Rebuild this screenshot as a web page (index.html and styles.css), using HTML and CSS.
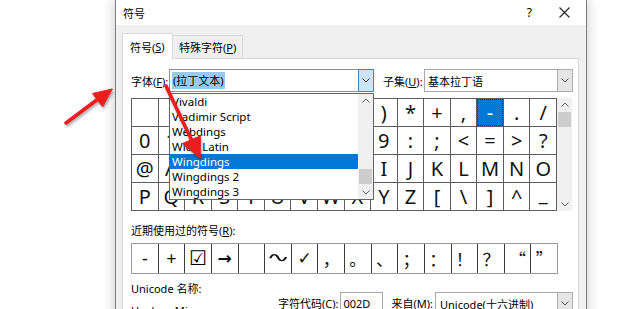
FILE: index.html
```html
<!DOCTYPE html>
<html>
<head>
<meta charset="utf-8">
<link rel="stylesheet" href="styles.css">
</head>
<body>
<div class="dialog">
  <div class="titlebar">
    <span class="title">符号</span>
    <span class="help">?</span>
    <svg class="close" width="11" height="11" viewBox="0 0 11 11"><path d="M0.5 0.5 L10.5 10.5 M10.5 0.5 L0.5 10.5" stroke="#222" stroke-width="1.1" fill="none"/></svg>
  </div>
  <div class="body">
    <div class="tabs">
      <div class="tab active">符号(<u>S</u>)</div>
      <div class="tab">特殊字符(<u>P</u>)</div>
    </div>
    <div class="panel">
      <div class="fontrow">
        <span class="lbl lbl-font">字体(<u>F</u>):</span>
        <div class="combo combo-font">
          <span class="value"><span class="sel">(拉丁文本)</span></span>
          <span class="btn btn-hot"><svg width="8" height="5" viewBox="0 0 8 5"><path d="M0.5 0.5 L4 4 L7.5 0.5" stroke="#333" fill="none"/></svg></span>
        </div>
        <span class="lbl lbl-subset">子集(<u>U</u>):</span>
        <div class="combo combo-subset">
          <span class="value">基本拉丁语</span>
          <span class="btn"><svg width="8" height="5" viewBox="0 0 8 5"><path d="M0.5 0.5 L4 4 L7.5 0.5" stroke="#555" fill="none"/></svg></span>
        </div>
      </div>
      <div class="gridwrap">
        <div class="grid">
          <span></span><span>!</span><span>"</span><span>#</span><span>$</span><span>%</span><span>&amp;</span><span>'</span><span>(</span><span>)</span><span>*</span><span>+</span><span>,</span><span class="cur">-</span><span>.</span><span>/</span>
          <span>0</span><span>1</span><span>2</span><span>3</span><span>4</span><span>5</span><span>6</span><span>7</span><span>8</span><span>9</span><span>:</span><span>;</span><span>&lt;</span><span>=</span><span>&gt;</span><span>?</span>
          <span>@</span><span>A</span><span>B</span><span>C</span><span>D</span><span>E</span><span>F</span><span>G</span><span>H</span><span>I</span><span>J</span><span>K</span><span>L</span><span>M</span><span>N</span><span>O</span>
          <span>P</span><span>Q</span><span>R</span><span>S</span><span>T</span><span>U</span><span>V</span><span>W</span><span>X</span><span>Y</span><span>Z</span><span>[</span><span>\</span><span>]</span><span>^</span><span class="us">_</span>
        </div>
        <div class="vscroll">
          <svg class="arr" width="8" height="5" viewBox="0 0 8 5"><path d="M0.5 4.5 L4 1 L7.5 4.5" stroke="#606060" fill="none"/></svg>
          <div class="thumb"></div>
          <div class="track"></div>
          <svg class="arr" width="8" height="5" viewBox="0 0 8 5"><path d="M0.5 0.5 L4 4 L7.5 0.5" stroke="#606060" fill="none"/></svg>
        </div>
      </div>
      <div class="recent-label">近期使用过的符号(<u>R</u>):</div>
      <div class="recent">
        <span>-</span><span>+</span><span class="sym box">&#x2611;&#xFE0E;</span><span class="sym arrow">→</span><span></span><span class="sym wave"><b class="wv">&#x223F;</b></span><span class="sym">&#x2713;&#xFE0E;</span><span class="cjk">，</span><span class="cjk">。</span><span class="cjk">、</span><span class="cjk">；</span><span class="cjk">：</span><span class="cjk">！</span><span class="cjk">？</span><span class="cjk">“</span><span class="cjk">”</span>
      </div>
      <div class="uname">Unicode 名称:</div>
      <div class="coderow">
        <span class="hname">Hyphen-Minus</span>
        <span class="lbl">字符代码(<u>C</u>):</span>
        <span class="input">002D</span>
        <span class="lbl lbl-from">来自(<u>M</u>):</span>
        <div class="combo combo-from">
          <span class="value">Unicode(十六进制)</span>
          <span class="btn"><svg width="8" height="5" viewBox="0 0 8 5"><path d="M0.5 0.5 L4 4 L7.5 0.5" stroke="#555" fill="none"/></svg></span>
        </div>
      </div>
    </div>
  </div>
  <div class="dropdown">
    <ul class="items">
      <li>Vivaldi</li>
      <li>Vladimir Script</li>
      <li>Webdings</li>
      <li>Wide Latin</li>
      <li class="on">Wingdings</li>
      <li>Wingdings 2</li>
      <li>Wingdings 3</li>
    </ul>
    <div class="lscroll">
      <svg class="arr" width="8" height="5" viewBox="0 0 8 5"><path d="M0.5 4.5 L4 1 L7.5 4.5" stroke="#606060" fill="none"/></svg>
      <div class="ltrack"></div>
      <div class="lthumb"></div>
      <svg class="arr" width="8" height="5" viewBox="0 0 8 5"><path d="M0.5 0.5 L4 4 L7.5 0.5" stroke="#606060" fill="none"/></svg>
    </div>
  </div>
</div>
<svg class="arrows" width="620" height="309" viewBox="0 0 620 309">
  <g fill="#ee1c1c" stroke="#ee1c1c" stroke-linecap="round">
    <line x1="66" y1="123" x2="98" y2="99" stroke-width="3.5"/>
    <polygon points="112,89 92.5,93.5 102.5,106.5" stroke-width="1" stroke-linejoin="round"/>
    <line x1="166" y1="86" x2="192" y2="141" stroke-width="3.5"/>
    <polygon points="200,158 182.5,143.5 200,136" stroke-width="1" stroke-linejoin="round"/>
  </g>
</svg>
</body>
</html>
```
FILE: styles.css
```css
* { box-sizing: border-box; }
html, body { margin: 0; padding: 0; }
body {
  width: 620px;
  height: 309px;
  overflow: hidden;
  position: relative;
  background: #fff;
  font-family: "Noto Sans", "Noto Sans CJK SC", sans-serif;
  font-size: 11px;
  color: #000;
}
u { text-decoration: underline; text-underline-offset: 1px; }

.dialog {
  position: absolute;
  left: 115px;
  top: -1px;
  width: 472px;
  height: 330px;
  border: 1px solid #7d7d7d;
  background: #f0f0f0;
  box-shadow: 0 0 12px rgba(0,0,0,0.22);
}
.titlebar {
  height: 25px;
  background: #fff;
  display: flex;
  align-items: center;
  padding-left: 7px;
  position: relative;
}
.title { font-size: 11px; flex: 1; }
.help { font-size: 12px; margin-right: 27px; font-family: "Noto Sans", sans-serif; }
.close { margin-right: 16px; }

.body { padding: 8px 7px 0 6px; }
.tabs { display: flex; align-items: flex-end; height: 25px; position: relative; z-index: 2; }
.tab {
  height: 23px;
  border: 1px solid #d9d9d9;
  border-bottom: none;
  border-left: none;
  padding: 0 0 0 6px;
  display: flex;
  align-items: center;
  background: #f0f0f0;
  font-size: 11px;
  white-space: nowrap;
}
.tab.active {
  height: 26px;
  margin-bottom: -1px;
  background: #fff;
  border-left: 1px solid #d9d9d9;
  padding: 0 0 0 7px;
  width: 51px;
}
.tab:nth-child(2) { width: 70px; }

.panel {
  background: #fff;
  border: 1px solid #d9d9d9;
  height: 270px;
  padding: 10px 5px 0 8px;
  position: relative;
  z-index: 1;
}
.fontrow { display: flex; align-items: center; height: 23px; }
.lbl { white-space: nowrap; }
.lbl-font { width: 38px; }
.lbl-subset { width: 41px; margin-left: 9px; }

.combo {
  display: flex;
  height: 23px;
  border: 1px solid #a8a8a8;
  background: #fff;
}
.combo .value { flex: 1; display: flex; align-items: center; padding-left: 2px; white-space: nowrap; overflow: hidden; }
.combo .btn {
  width: 16px;
  margin: -1px -1px -1px 0;
  border: 1px solid #adadad;
  background: #e5e5e5;
  display: flex;
  align-items: center;
  justify-content: center;
}
.combo .btn-hot { border-color: #3a86c9; background: #cde4f7; }
.combo-font { width: 205px; border-color: #8f8f8f; }
.combo-subset { width: 149px; }
.combo-subset .value { padding-left: 3px; }
.sel { background: #99c9ef; padding: 1px 1px; line-height: 15px; }

.gridwrap { display: flex; margin-top: 6px; }
.grid {
  width: 426px;
  display: grid;
  grid-template-columns: repeat(16, 1fr);
  grid-auto-rows: 27px;
  gap: 1px;
  background: #5e5e5e;
  border: 1px solid #5e5e5e;
}
.grid span {
  background: #fff;
  font-size: 20px;
  line-height: 27px;
  text-align: center;
  color: #111;
}
.grid span.cur {
  background: #0078d7;
  color: #fff;
  outline: 1px dotted #3a2a1a;
  outline-offset: -1px;
}
.grid span.us { line-height: 22px; }

.vscroll {
  width: 15px;
  height: 113px;
  background: #f0f0f0;
  display: flex;
  flex-direction: column;
  align-items: center;
  padding: 4px 0 4px;
}
.vscroll .thumb { width: 13px; height: 15px; background: #cdcdcd; margin-top: 5px; }
.vscroll .track { flex: 1; }

.recent-label { margin-top: 13px; line-height: 14px; height: 14px; }
.recent {
  margin-top: 5px;
  width: 427px;
  height: 31px;
  display: grid;
  grid-template-columns: repeat(16, 1fr);
  gap: 1px;
  background: #3c3c3c;
  border: 1px solid #9a9a9a;
}
.recent span {
  background: #fff;
  font-size: 18px;
  line-height: 29px;
  text-align: center;
  color: #111;
}
.recent span.sym { font-family: "DejaVu Sans", sans-serif; font-size: 17px; font-variant-emoji: text; }
.recent span.box { font-size: 20px; font-weight: bold; color: #000; }
.recent span.arrow { font-weight: bold; }
.recent span.wave { font-size: 17px; line-height: 27px; }
.wv { display: inline-block; font-weight: normal; transform: scale(1.7, 0.8) rotate(0deg); }
.recent span.cjk { font-family: "Noto Sans CJK SC", sans-serif; font-size: 17px; }

.uname { margin-top: 8px; line-height: 14px; height: 14px; }
.coderow { display: flex; align-items: flex-start; margin-top: -4px; height: 23px; }
.coderow .hname { flex: 1; margin-top: 12px; line-height: 14px; }
.coderow .lbl { line-height: 23px; }
.coderow .input {
  width: 43px;
  height: 23px;
  border: 1px solid #a8a8a8;
  margin-left: 2px;
  padding-left: 2px;
  line-height: 21px;
}
.lbl-from { margin-left: 8px; margin-right: 2px; }
.combo-from { width: 138px; }
.combo-from .value { padding-left: 4px; }

.dropdown {
  position: absolute;
  left: 53px;
  top: 93px;
  width: 205px;
  height: 107px;
  border: 1px solid #646464;
  background: #fff;
  display: flex;
  z-index: 5;
}
.items { list-style: none; margin: 0; padding: 0; flex: 1; }
.items li {
  height: 15px;
  line-height: 15px;
  padding-left: 2px;
  font-size: 11.5px;
  white-space: nowrap;
}
.items li.on { background: #0078d7; color: #fff; }
.lscroll {
  width: 15px;
  background: #f0f0f0;
  display: flex;
  flex-direction: column;
  align-items: center;
  padding: 4px 0 4px;
}
.lscroll .ltrack { flex: 1; }
.lscroll .lthumb { width: 13px; height: 15px; background: #cdcdcd; margin-bottom: 6px; }

.arrows {
  position: absolute;
  left: 0;
  top: 0;
  z-index: 10;
  pointer-events: none;
  filter: drop-shadow(1px 2px 1.5px rgba(0,0,0,0.35));
}
```
